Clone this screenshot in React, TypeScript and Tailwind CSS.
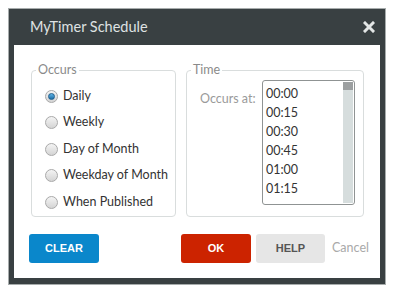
import React from 'react';

const OCCURS = ['Daily', 'Weekly', 'Day of Month', 'Weekday of Month', 'When Published'];
const TIMES = ['00:00', '00:15', '00:30', '00:45', '01:00', '01:15'];

const Radio = ({ checked, label }: { checked?: boolean; label: string }) => (
  <label className="flex items-center gap-[5px] h-[26.5px] whitespace-nowrap">
    <span className="w-[13px] h-[13px] shrink-0 rounded-full border border-[#a9a9a9] bg-gradient-to-b from-[#f4f4f4] to-[#d4d4d4] flex items-center justify-center">
      {checked && (
        <span className="w-[7px] h-[7px] rounded-full bg-gradient-to-b from-[#5fb4e6] to-[#1c6fa8] border border-[#1f5e8c]" />
      )}
    </span>
    <span className="text-[12.5px] text-[#333]">{label}</span>
  </label>
);

export default function App() {
  return (
    <div className="p-2 bg-white" style={{ fontFamily: 'Lato, "Open Sans", sans-serif' }}>
      <div className="w-[378px] border border-[#a7acac] bg-[#394042] px-[5px] pb-[6px]">
        <div className="h-[36px] flex items-center justify-between pl-4 pr-[5px]">
          <span className="text-[14.5px] text-[#dfe2e2]">MyTimer Schedule</span>
          <svg width="12" height="12" viewBox="0 0 12 12">
            <path d="M2 2 L10 10 M10 2 L2 10" stroke="#e3e6e6" strokeWidth="3" strokeLinecap="square" />
          </svg>
        </div>
        <div className="bg-white px-[15px] pt-[17px] pb-[15px]">
          <div className="flex gap-[10px] ml-[2px]">
            <fieldset className="w-[145px] h-[155px] shrink-0 border border-[#d9dddd] rounded-[4px] pl-[13px] pt-[5px] m-0">
              <legend className="text-[12.5px] text-[#8a8a8a] px-[2px] ml-[-9px] leading-[16px]">Occurs</legend>
              {OCCURS.map((o, i) => (
                <Radio key={o} label={o} checked={i === 0} />
              ))}
            </fieldset>
            <fieldset className="w-[178px] h-[155px] shrink-0 border border-[#d9dddd] rounded-[4px] pl-[13px] pt-[2px] m-0">
              <legend className="text-[12.5px] text-[#8a8a8a] px-[2px] ml-[-9px] leading-[16px]">Time</legend>
              <div className="flex gap-[8px]">
                <span className="w-[54px] text-[12.5px] text-[#9a9a9a] pt-[10px] whitespace-nowrap">Occurs at:</span>
                <div className="w-[93px] h-[125px] border border-[#8f9393] rounded-[3px] flex overflow-hidden">
                  <div className="flex-1 pl-[3px] pt-[3px] overflow-hidden">
                    {TIMES.map((t) => (
                      <div key={t} className="text-[12.5px] text-[#333] h-[19px] leading-[19px]">
                        {t}
                      </div>
                    ))}
                  </div>
                  <div className="w-[10px] bg-[#d6dddd] my-[1px] mr-[1px]">
                    <div className="h-[8px] bg-[#9c9fa0]" />
                  </div>
                </div>
              </div>
            </fieldset>
          </div>
          <div className="flex items-center mt-[17px]" style={{ fontFamily: '"Liberation Sans", Arial, sans-serif' }}>
            <button className="w-[70px] h-[29px] shrink-0 rounded-[3px] bg-[#0a87cb] text-white text-[11px] font-bold">CLEAR</button>
            <button className="w-[70px] h-[29px] shrink-0 rounded-[3px] bg-[#cc2300] text-white text-[11px] font-bold ml-[82px]">OK</button>
            <button className="w-[69px] h-[29px] shrink-0 rounded-[3px] bg-[#e6e6e6] text-[#555] text-[11px] font-bold ml-[5px]">HELP</button>
            <span className="text-[12.5px] text-[#a9a9a9] ml-[7px] whitespace-nowrap" style={{ fontFamily: 'Lato, sans-serif' }}>Cancel</span>
          </div>
        </div>
      </div>
    </div>
  );
}
